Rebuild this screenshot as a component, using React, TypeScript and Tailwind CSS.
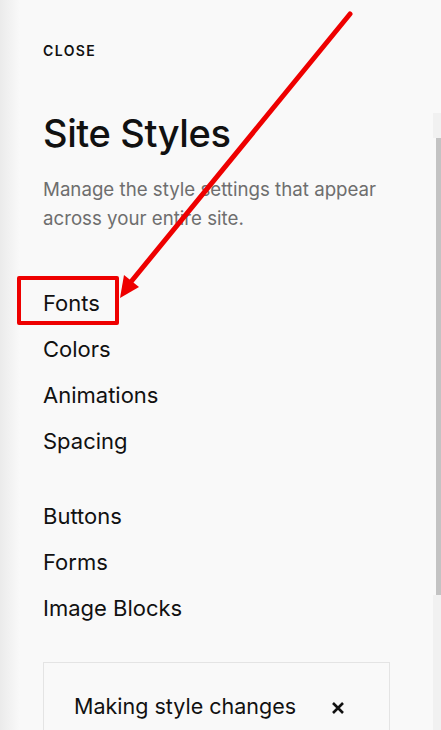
import React from "react";

const navA = ["Fonts", "Colors", "Animations", "Spacing"];
const navB = ["Buttons", "Forms", "Image Blocks"];

export default function App() {
  return (
    <div
      className="relative w-[441px] h-[730px] overflow-hidden bg-[#f9f9f9] text-[#111]"
      style={{ fontFamily: "Inter, 'Liberation Sans', sans-serif" }}
    >
      <div className="flex h-full">
        <div className="w-[20px] shrink-0 bg-gradient-to-r from-[#ebebeb] to-[#f9f9f9]" />
        <div className="flex-1 pl-[23px] pr-[40px] pt-[43px]">
          <div className="text-[14px] font-semibold tracking-[0.1em] leading-[16px]">CLOSE</div>
          <h1 className="mt-[52px] text-[38px] font-medium leading-[44px] tracking-[-0.01em]">Site Styles</h1>
          <p className="mt-[20px] text-[18.7px] leading-[29px] text-[#6e6e6e]">
            Manage the style settings that appear across your entire site.
          </p>
          <div className="mt-[47px] flex flex-col">
            {navA.map((n) => (
              <div key={n} className="h-[46px] flex items-center text-[22px]">{n}</div>
            ))}
          </div>
          <div className="mt-[29px] flex flex-col">
            {navB.map((n) => (
              <div key={n} className="h-[46px] flex items-center text-[22px]">{n}</div>
            ))}
          </div>
          <div className="mt-[31px] mr-[3px] border border-[#e4e4e4] h-[120px] pl-[30px] pr-[44px] pt-[27px]">
            <div className="flex items-center justify-between">
              <span className="text-[21.5px]">Making style changes</span>
              <svg width="14" height="14" viewBox="0 0 14 14" className="mt-[4px]">
                <path d="M2 2 L12 12 M12 2 L2 12" stroke="#111" strokeWidth="2.6" />
              </svg>
            </div>
          </div>
        </div>
        <div className="w-[8px] shrink-0 pt-[113px] flex flex-col">
          <div className="h-[25px] bg-[#f1f1f1]" />
          <div className="h-[457px] ml-[3px] bg-[#c3c3c3]" />
          <div className="flex-1 bg-[#f1f1f1]" />
        </div>
      </div>

      <div className="absolute left-[17px] top-[276px] w-[102px] h-[49px] border-[4px] border-[#ee0000] rounded-[2px]" />
      <svg className="absolute left-0 top-0" width="441" height="730" viewBox="0 0 441 730">
        <line x1="350" y1="14" x2="130" y2="283" stroke="#ee0000" strokeWidth="5" strokeLinecap="round" />
        <polygon points="120,298 124,275 139,287" fill="#ee0000" />
      </svg>
    </div>
  );
}
